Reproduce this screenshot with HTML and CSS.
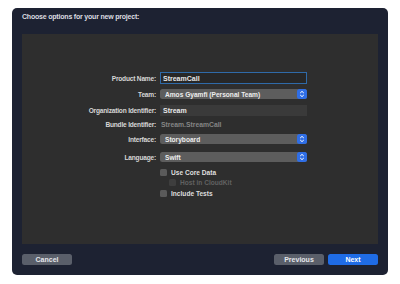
FILE: index.html
```html
<!DOCTYPE html>
<html lang="en">
<head>
    <meta charset="UTF-8">
    <meta name="viewport" content="width=device-width, initial-scale=1.0">
    <title>New Project Options</title>
    <link rel="stylesheet" href="styles.css">
</head>
<body>
    <div class="window">
        <div class="title">Choose options for your new project:</div>

        <div class="panel">
            <div class="form">
                <div class="row row-name">
                    <label>Product Name:</label>
                    <div class="field focused">StreamCall</div>
                </div>
                <div class="row row-team">
                    <label>Team:</label>
                    <div class="popup">
                        <span>Amos Gyamfi (Personal Team)</span>
                        <svg class="arrows" viewBox="0 0 10 10"><rect width="10" height="10" rx="2.5" fill="#2f6ee6"/><path d="M3.2 4 L5 2.4 L6.8 4 M3.2 6 L5 7.6 L6.8 6" stroke="#fff" stroke-width="1" fill="none"/></svg>
                    </div>
                </div>
                <div class="row row-org">
                    <label>Organization Identifier:</label>
                    <div class="field">Stream</div>
                </div>
                <div class="row row-bundle">
                    <label>Bundle Identifier:</label>
                    <div class="plain">Stream.StreamCall</div>
                </div>
                <div class="row row-interface">
                    <label>Interface:</label>
                    <div class="popup">
                        <span>Storyboard</span>
                        <svg class="arrows" viewBox="0 0 10 10"><rect width="10" height="10" rx="2.5" fill="#2f6ee6"/><path d="M3.2 4 L5 2.4 L6.8 4 M3.2 6 L5 7.6 L6.8 6" stroke="#fff" stroke-width="1" fill="none"/></svg>
                    </div>
                </div>
                <div class="row row-language">
                    <label>Language:</label>
                    <div class="popup">
                        <span>Swift</span>
                        <svg class="arrows" viewBox="0 0 10 10"><rect width="10" height="10" rx="2.5" fill="#2f6ee6"/><path d="M3.2 4 L5 2.4 L6.8 4 M3.2 6 L5 7.6 L6.8 6" stroke="#fff" stroke-width="1" fill="none"/></svg>
                    </div>
                </div>
                <div class="row row-check first">
                    <label></label>
                    <div class="check"><span class="box"></span>Use Core Data</div>
                </div>
                <div class="row row-check">
                    <label></label>
                    <div class="check sub disabled"><span class="box"></span>Host in CloudKit</div>
                </div>
                <div class="row row-check">
                    <label></label>
                    <div class="check"><span class="box"></span>Include Tests</div>
                </div>
            </div>
        </div>

        <div class="buttons">
            <button class="btn">Cancel</button>
            <div class="right">
                <button class="btn">Previous</button>
                <button class="btn primary">Next</button>
            </div>
        </div>
    </div>
</body>
</html>
```

FILE: styles.css
```css
* {
    margin: 0;
    padding: 0;
    box-sizing: border-box;
    font-family: 'Liberation Sans', Arial, sans-serif;
}

body {
    background: #fff;
    width: 400px;
    height: 284px;
    overflow: hidden;
}

.window {
    margin: 8px 0 0 12px;
    width: 376px;
    height: 267px;
    background: #1d2232;
    border-radius: 5px;
    padding: 0 10px;
    display: flex;
    flex-direction: column;
}

.title {
    height: 26px;
    padding-top: 5px;
    font-size: 7px;
    font-weight: bold;
    letter-spacing: -0.2px;
    color: #dcdde0;
}

.panel {
    height: 210px;
    background: #2e2e2e;
    padding-top: 38px;
}

.row {
    display: flex;
    align-items: center;
}

.row label {
    flex: none;
    width: 138px;
    padding-right: 4px;
    text-align: right;
    font-size: 6.6px;
    font-weight: bold;
    letter-spacing: -0.2px;
    color: #d6d6d6;
}

.row-name { height: 12px; }
.row-team { height: 10px; margin-top: 5px; }
.row-org { height: 11px; margin-top: 6px; }
.row-bundle { height: 12px; margin-top: 2px; }
.row-interface { height: 10px; margin-top: 4px; }
.row-language { height: 10px; margin-top: 8px; }
.row-check { height: 10.5px; }
.row-check.first { margin-top: 5px; }

.field {
    width: 147px;
    height: 100%;
    background: #3a3a3a;
    color: #e8e8e8;
    font-size: 7px;
    font-weight: bold;
    padding-left: 3px;
    display: flex;
    align-items: center;
}

.field.focused {
    background: #272727;
    border: 1.5px solid #2f6aa8;
    padding-left: 2px;
}

.plain {
    font-size: 6.8px;
    font-weight: bold;
    color: #858585;
    padding-left: 1px;
}

.popup {
    width: 147px;
    height: 100%;
    background: #5d5d5d;
    border-radius: 2.5px;
    color: #ededed;
    font-size: 6.6px;
    font-weight: bold;
    padding-left: 5px;
    display: flex;
    align-items: center;
    justify-content: space-between;
}

.arrows {
    width: 10px;
    height: 10px;
}

.check {
    display: flex;
    align-items: center;
    gap: 4px;
    font-size: 6.6px;
    font-weight: bold;
    color: #dedede;
}

.check .box {
    width: 7px;
    height: 7px;
    border-radius: 1.5px;
    background: #5a5a5a;
}

.check.sub {
    margin-left: 9px;
}

.check.disabled {
    color: #616161;
}

.check.disabled .box {
    background: #3e3e3e;
}

.buttons {
    margin-top: 10px;
    display: flex;
    justify-content: space-between;
}

.right {
    display: flex;
    gap: 4px;
}

.btn {
    width: 50px;
    height: 11px;
    border: none;
    border-radius: 2.5px;
    background: #5a5f6a;
    color: #e4e6ea;
    font-size: 7px;
    font-weight: bold;
    line-height: 11px;
}

.btn.primary {
    background: #1f6ce6;
    color: #fff;
}
```
